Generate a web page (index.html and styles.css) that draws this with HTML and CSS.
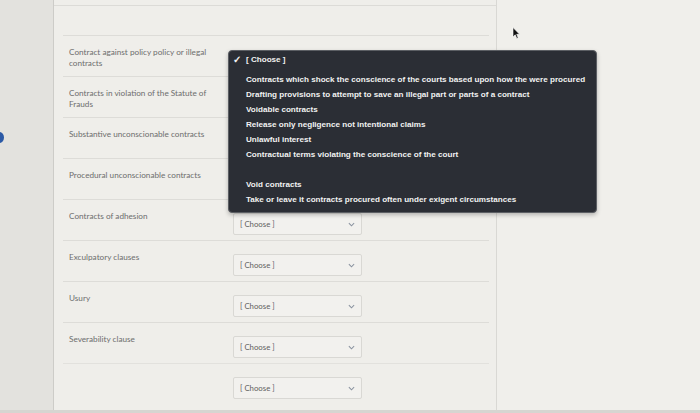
FILE: index.html
```html
<!DOCTYPE html>
<html>
<head>
<meta charset="utf-8">
<link rel="stylesheet" href="styles.css">
</head>
<body>
<div class="screen">
  <aside class="sidebar"><span class="dot"></span></aside>
  <main class="main">
    <section class="panel">
      <div class="panel-top"></div>
      <div class="rows">
        <div class="row"><div class="label">Contract against policy policy or illegal contracts</div><div class="select covered"></div></div>
        <div class="row"><div class="label">Contracts in violation of the Statute of Frauds</div><div class="select covered"></div></div>
        <div class="row"><div class="label">Substantive unconscionable contracts</div><div class="select covered"></div></div>
        <div class="row"><div class="label">Procedural unconscionable contracts</div><div class="select covered"></div></div>
        <div class="row"><div class="label">Contracts of adhesion</div><div class="select"><span>[ Choose ]</span><svg class="chev" viewBox="0 0 8 5"><path d="M1 1 L4 4 L7 1" /></svg></div></div>
        <div class="row"><div class="label">Exculpatory clauses</div><div class="select"><span>[ Choose ]</span><svg class="chev" viewBox="0 0 8 5"><path d="M1 1 L4 4 L7 1" /></svg></div></div>
        <div class="row"><div class="label">Usury</div><div class="select"><span>[ Choose ]</span><svg class="chev" viewBox="0 0 8 5"><path d="M1 1 L4 4 L7 1" /></svg></div></div>
        <div class="row"><div class="label">Severability clause</div><div class="select"><span>[ Choose ]</span><svg class="chev" viewBox="0 0 8 5"><path d="M1 1 L4 4 L7 1" /></svg></div></div>
        <div class="row"><div class="label"></div><div class="select"><span>[ Choose ]</span><svg class="chev" viewBox="0 0 8 5"><path d="M1 1 L4 4 L7 1" /></svg></div></div>
      </div>
    </section>
    <div class="rest"></div>
  </main>

  <ul class="menu">
    <li class="opt checked"><span class="check">✓</span>[ Choose ]</li>
    <li class="opt">Contracts which shock the conscience of the courts based upon how the were procured</li>
    <li class="opt">Drafting provisions to attempt to save an illegal part or parts of a contract</li>
    <li class="opt">Voidable contracts</li>
    <li class="opt">Release only negligence not intentional claims</li>
    <li class="opt">Unlawful interest</li>
    <li class="opt">Contractual terms violating the conscience of the court</li>
    <li class="opt empty">&nbsp;</li>
    <li class="opt">Void contracts</li>
    <li class="opt">Take or leave it contracts procured often under exigent circumstances</li>
  </ul>

  <svg class="cursor" viewBox="0 0 8 12"><path d="M1 0.5 L1 10 L3.2 7.8 L4.8 11.4 L6.2 10.8 L4.7 7.3 L7.6 7.3 Z" fill="#111" stroke="#fff" stroke-width="0.6"/></svg>
</div>
</body>
</html>
```
FILE: styles.css
```css
* { box-sizing: border-box; }
html, body { margin: 0; padding: 0; }
body {
  width: 700px;
  height: 413px;
  overflow: hidden;
  background: #efeeea;
  font-family: Lato, "Liberation Sans", sans-serif;
}
.screen {
  position: relative;
  display: flex;
  width: 700px;
  height: 413px;
  border-bottom: 3px solid #d6d5d1;
}
.sidebar {
  position: relative;
  width: 54px;
  flex: none;
  background: #e3e2de;
  border-right: 1px solid #cdccc8;
}
.dot {
  position: absolute;
  left: -6px;
  top: 132px;
  width: 10px;
  height: 11px;
  border-radius: 50%;
  background: #2c5aa6;
}
.main {
  flex: 1;
  display: flex;
}
.panel {
  width: 443px;
  flex: none;
  border-right: 1px solid #d9d8d4;
  padding-top: 5px;
  background: #efeeea;
}
.panel-top {
  border-top: 1px solid #dcdbd7;
}
.rows {
  margin-top: 29px;
  margin-left: 9px;
  width: 426px;
}
.row {
  display: flex;
  height: 41px;
  border-top: 1px solid #dddcd8;
  padding-left: 6px;
}
.row:last-child { border-top-color: #e2e1dd; }
.label {
  width: 163px;
  flex: none;
  padding-top: 11px;
  font-size: 8.2px;
  line-height: 10.5px;
  color: #6d6d6d;
  padding-right: 18px;
}
.select {
  margin-top: 13px;
  margin-left: 1px;
  width: 129px;
  height: 22px;
  border: 1px solid #d9d8d4;
  border-radius: 2px;
  background: #f2f1ee;
  display: flex;
  align-items: center;
  justify-content: space-between;
  padding: 0 6px 0 6px;
  font-size: 7.8px;
  color: #5f5f5f;
}
.select.covered { visibility: hidden; }
.chev {
  width: 7px;
  height: 5px;
  fill: none;
  stroke: #8a93a0;
  stroke-width: 1.2;
}
.rest {
  flex: 1;
  background: #f0efeb;
}
.menu {
  position: absolute;
  left: 228px;
  top: 50px;
  width: 369px;
  height: 163px;
  margin: 0;
  padding: 4px 0 0 0;
  list-style: none;
  background: #2b2e35;
  border: 1px solid #5c5f64;
  border-radius: 4px;
  box-shadow: 0 2px 4px rgba(0,0,0,0.25);
  font-family: "Liberation Sans", Arial, sans-serif;
  font-weight: bold;
  font-size: 8.1px;
  color: #f2f2f2;
}
.opt {
  height: 15px;
  line-height: 15px;
  padding-left: 17px;
  white-space: nowrap;
}
.opt.checked {
  position: relative;
  height: 17px;
  line-height: 10px;
  padding-left: 17px;
}
.check {
  position: absolute;
  left: 4px;
  top: 0;
  font-size: 10px;
}
.cursor {
  position: absolute;
  left: 512px;
  top: 27px;
  width: 8px;
  height: 12px;
}
```
